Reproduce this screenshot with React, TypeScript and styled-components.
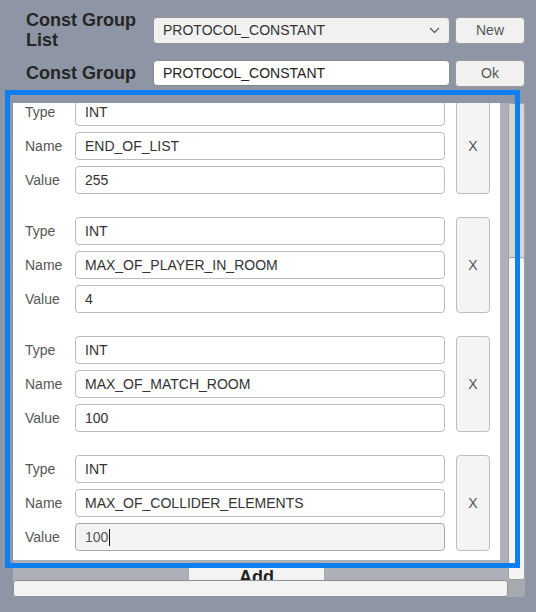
import React, { useLayoutEffect, useRef } from 'react';
import styled, { createGlobalStyle } from 'styled-components';

const GlobalStyle = createGlobalStyle`
  body {
    margin: 0;
    background: #8e95a5;
    font-family: 'Liberation Sans', Arial, sans-serif;
  }
`;

interface ConstItem {
  type: string;
  name: string;
  value: string;
}

const items: ConstItem[] = [
  { type: 'INT', name: 'END_OF_LIST', value: '255' },
  { type: 'INT', name: 'MAX_OF_PLAYER_IN_ROOM', value: '4' },
  { type: 'INT', name: 'MAX_OF_MATCH_ROOM', value: '100' },
  { type: 'INT', name: 'MAX_OF_COLLIDER_ELEMENTS', value: '100' },
];

export default function App() {
  const viewportRef = useRef<HTMLDivElement>(null);

  // 스크롤 위치 (목록 맨 아래 근처)
  useLayoutEffect(() => {
    if (viewportRef.current) viewportRef.current.scrollTop = 14;
  }, []);

  return (
    <Page>
      <GlobalStyle />
      <Header>
        <HeaderLabel>Const Group List</HeaderLabel>
        <Dropdown>
          <span>PROTOCOL_CONSTANT</span>
          <svg width="11" height="7" viewBox="0 0 11 7">
            <path d="M1 1 L5.5 5.5 L10 1" fill="none" stroke="#555" strokeWidth="1.2" />
          </svg>
        </Dropdown>
        <HeaderButton>New</HeaderButton>
        <HeaderLabel>Const Group</HeaderLabel>
        <HeaderField>PROTOCOL_CONSTANT</HeaderField>
        <HeaderButton>Ok</HeaderButton>
      </Header>

      <ScrollView>
        <Viewport ref={viewportRef}>
          <Content>
            <ListPanel>
              {items.map((item, i) => {
                const last = i === items.length - 1;
                return (
                  <Item key={item.name}>
                    <Fields>
                      <FieldRow>
                        <FieldLabel>Type</FieldLabel>
                        <Field>{item.type}</Field>
                      </FieldRow>
                      <FieldRow>
                        <FieldLabel>Name</FieldLabel>
                        <Field>{item.name}</Field>
                      </FieldRow>
                      <FieldRow>
                        <FieldLabel>Value</FieldLabel>
                        <Field focused={last}>
                          {item.value}
                          {last && <Caret />}
                        </Field>
                      </FieldRow>
                    </Fields>
                    <RemoveBtn>X</RemoveBtn>
                  </Item>
                );
              })}
            </ListPanel>
            <AddBtn>Add</AddBtn>
          </Content>
        </Viewport>
        <VScroller>
          <VThumb />
        </VScroller>
        <HScroller />
        <Corner />
      </ScrollView>

      <Selection />
    </Page>
  );
}

const Page = styled.div`
  position: relative;
  width: 536px;
  height: 612px;
  box-sizing: border-box;
  padding: 10px 11px 0 13px;
  background: #8e95a5;
`;

const Header = styled.div`
  display: grid;
  grid-template-columns: 122px 1fr 70px;
  grid-template-rows: 40px 26px;
  column-gap: 5px;
  row-gap: 10px;
  align-items: center;
  padding-left: 13px;
`;

const HeaderLabel = styled.div`
  font-size: 18px;
  line-height: 20px;
  font-weight: bold;
  color: #262626;
`;

const Dropdown = styled.div`
  height: 27px;
  box-sizing: border-box;
  display: flex;
  align-items: center;
  justify-content: space-between;
  padding: 0 9px 0 9px;
  background: #f1f1f1;
  border: 1px solid #959595;
  border-radius: 4px;
  font-size: 14px;
  color: #333;
`;

const HeaderField = styled.div`
  height: 26px;
  box-sizing: border-box;
  display: flex;
  align-items: center;
  padding: 0 9px;
  background: #ffffff;
  border: 1px solid #8a8a8a;
  border-radius: 4px;
  font-size: 14px;
  color: #222;
`;

const HeaderButton = styled.div`
  height: 27px;
  box-sizing: border-box;
  display: flex;
  align-items: center;
  justify-content: center;
  background: #f1f1f1;
  border: 1px solid #9a9a9a;
  border-radius: 4px;
  font-size: 14px;
  color: #555;
`;

const ScrollView = styled.div`
  margin-top: 17px;
  height: 494px;
  display: grid;
  grid-template-columns: 1fr 17px;
  grid-template-rows: 1fr 17px;
  background: #adb0b8;
  border-radius: 0 0 3px 0;
`;

const Viewport = styled.div`
  overflow: hidden;
`;

const Content = styled.div`
  width: 487px;
  display: flex;
  flex-direction: column;
  align-items: center;
`;

const ListPanel = styled.div`
  align-self: stretch;
  display: flex;
  flex-direction: column;
  gap: 23px;
  padding: 9px 10px 9px 12px;
  background: #ffffff;
`;

const Item = styled.div`
  display: flex;
  gap: 11px;
`;

const Fields = styled.div`
  flex: 1;
  display: flex;
  flex-direction: column;
  gap: 6px;
`;

const FieldRow = styled.div`
  display: flex;
  align-items: center;
`;

const FieldLabel = styled.div`
  width: 50px;
  font-size: 14px;
  color: #555;
`;

const Field = styled.div<{ focused?: boolean }>`
  flex: 1;
  height: 28px;
  box-sizing: border-box;
  display: flex;
  align-items: center;
  padding: 0 9px;
  background: ${(p) => (p.focused ? '#f3f3f3' : '#ffffff')};
  border: 1px solid ${(p) => (p.focused ? '#a9a9a9' : '#bcbcbc')};
  border-radius: 4px;
  font-size: 14px;
  color: ${(p) => (p.focused ? '#555' : '#333')};
`;

const Caret = styled.span`
  display: inline-block;
  width: 1px;
  height: 17px;
  background: #111;
  margin-left: 1px;
`;

const RemoveBtn = styled.div`
  width: 34px;
  box-sizing: border-box;
  display: flex;
  align-items: center;
  justify-content: center;
  background: #f4f4f4;
  border: 1px solid #bdbdbd;
  border-radius: 4px;
  font-size: 14px;
  color: #555;
`;

const AddBtn = styled.div`
  margin-top: 2px;
  width: 137px;
  height: 30px;
  box-sizing: border-box;
  display: flex;
  align-items: center;
  justify-content: center;
  background: #f4f4f4;
  border: 1px solid #a9a9a9;
  border-radius: 4px;
  font-size: 18px;
  font-weight: bold;
  color: #222;
`;

const VScroller = styled.div`
  display: flex;
  flex-direction: column;
  justify-content: flex-end;
  background: #d6d6d6;
  border: 1px solid #a3a3a3;
  border-radius: 3px;
  box-sizing: border-box;
`;

const VThumb = styled.div`
  height: 321px;
  background: #f4f4f4;
  border: 1px solid #9f9f9f;
  border-radius: 3px;
  margin: 0 -1px -1px;
`;

const HScroller = styled.div`
  background: #f3f3f3;
  border: 1px solid #8f8f8f;
  border-radius: 3px;
`;

const Corner = styled.div`
  background: #a6a9b0;
  border-radius: 0 0 3px 0;
`;

const Selection = styled.div`
  position: absolute;
  left: 5px;
  top: 90px;
  width: 515px;
  height: 478px;
  box-sizing: border-box;
  border: 5px solid #0e7ff0;
  pointer-events: none;
`;
